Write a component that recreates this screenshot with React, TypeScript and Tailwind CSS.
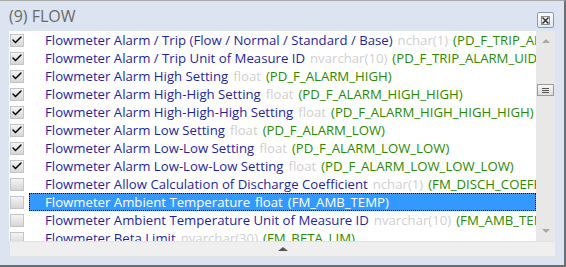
import { Check } from "lucide-react";

type Field = {
  label: string;
  type: string;
  column: string;
  checked: boolean;
  selected?: boolean;
};

const fields: Field[] = [
  { label: "Flowmeter Alarm / Trip (Flow / Normal / Standard / Base)", type: "nchar(1)", column: "(PD_F_TRIP_ALARM)", checked: true },
  { label: "Flowmeter Alarm / Trip Unit of Measure ID", type: "nvarchar(10)", column: "(PD_F_TRIP_ALARM_UID)", checked: true },
  { label: "Flowmeter Alarm High Setting", type: "float", column: "(PD_F_ALARM_HIGH)", checked: true },
  { label: "Flowmeter Alarm High-High Setting", type: "float", column: "(PD_F_ALARM_HIGH_HIGH)", checked: true },
  { label: "Flowmeter Alarm High-High-High Setting", type: "float", column: "(PD_F_ALARM_HIGH_HIGH_HIGH)", checked: true },
  { label: "Flowmeter Alarm Low Setting", type: "float", column: "(PD_F_ALARM_LOW)", checked: true },
  { label: "Flowmeter Alarm Low-Low Setting", type: "float", column: "(PD_F_ALARM_LOW_LOW)", checked: true },
  { label: "Flowmeter Alarm Low-Low-Low Setting", type: "float", column: "(PD_F_ALARM_LOW_LOW_LOW)", checked: true },
  { label: "Flowmeter Allow Calculation of Discharge Coefficient", type: "nchar(1)", column: "(FM_DISCH_COEFF)", checked: false },
  { label: "Flowmeter Ambient Temperature", type: "float", column: "(FM_AMB_TEMP)", checked: false, selected: true },
  { label: "Flowmeter Ambient Temperature Unit of Measure ID", type: "nvarchar(10)", column: "(FM_AMB_TEMP_UID)", checked: false },
  { label: "Flowmeter Beta Limit", type: "nvarchar(30)", column: "(FM_BETA_LIM)", checked: false },
];

const Box = ({ checked }: { checked: boolean }) => (
  <div className="w-[14px] h-[13px] shrink-0 border border-[#c4c4c4] bg-gradient-to-b from-[#f4f4f4] to-[#d6d6d6] flex items-center justify-center">
    {checked && <Check size={12} strokeWidth={3} className="text-black -mt-[1px]" />}
  </div>
);

const Row = ({ f }: { f: Field }) => (
  <div className="h-[18px] flex items-center shrink-0">
    <div className="w-[19px] pl-[1px] flex items-center">
      <Box checked={f.checked} />
    </div>
    <div
      className={
        "ml-[1px] flex-1 h-[18px] flex items-center pl-[16px] whitespace-nowrap overflow-hidden " +
        (f.selected ? "bg-[#3399ff] outline outline-1 outline-dotted outline-black -outline-offset-1" : "")
      }
    >
      <span className={f.selected ? "text-white" : "text-[#1f1fa0]"}>{f.label}</span>
      <span className={"ml-[5px] " + (f.selected ? "text-white" : "text-[#cfcfcf]")}>{f.type}</span>
      <span className={"ml-[5px] " + (f.selected ? "text-white" : "text-[#2a8a00]")}>{f.column}</span>
    </div>
  </div>
);

export default function App() {
  return (
    <div
      className="w-[566px] h-[267px] bg-[#dbe4f0] border-t border-t-[#a9a9a9] border-r-2 border-r-[#6e6e6e] border-b-2 border-b-[#6e6e6e] flex flex-col"
      style={{ fontFamily: '"Open Sans", "Noto Sans", sans-serif' }}
    >
      <div className="h-[30px] flex items-start pl-[9px] pr-[10px]">
        <div className="mt-[6px] text-[16px] text-[#6a6a6a] leading-[18px]">(9) FLOW</div>
        <div className="ml-auto mt-[11px] w-[17px] h-[16px] border border-[#8c9ab0] rounded-[2px] bg-gradient-to-b from-[#fafafa] to-[#e4e8ee] flex items-center justify-center">
          <svg width="9" height="9" viewBox="0 0 9 9">
            <path d="M1.5 1.5 L7.5 7.5 M7.5 1.5 L1.5 7.5" stroke="#333" strokeWidth="1.5" />
            <rect x="0.5" y="0.5" width="8" height="8" fill="none" stroke="#777" strokeWidth="0.8" />
          </svg>
        </div>
      </div>
      <div className="flex ml-[9px] mr-[9px] h-[210px]">
        <div className="flex-1 bg-white flex flex-col overflow-hidden text-[13.2px] leading-[18px]">
          {fields.map((f) => (
            <Row key={f.label} f={f} />
          ))}
        </div>
        <div className="w-[19px] bg-[#e8e8e8] flex flex-col items-center">
          <div className="mt-[8px] w-0 h-0 border-l-[4px] border-r-[4px] border-b-[4px] border-l-transparent border-r-transparent border-b-[#a8a8a8]" />
          <div className="mt-[41px] w-[17px] h-[12px] border border-[#9a9a9a] bg-gradient-to-b from-[#f6f6f6] to-[#dcdcdc] flex flex-col items-center justify-center gap-[1px]">
            <div className="w-[7px] h-[1px] bg-[#555]" />
            <div className="w-[7px] h-[1px] bg-[#555]" />
            <div className="w-[7px] h-[1px] bg-[#555]" />
          </div>
          <div className="mt-auto mb-[8px] w-0 h-0 border-l-[4px] border-r-[4px] border-t-[4px] border-l-transparent border-r-transparent border-t-[#a8a8a8]" />
        </div>
      </div>
      <div className="ml-[9px] mr-[8px] h-[16px] bg-[#efefef] border border-[#e2e2e2] flex items-center justify-center">
        <div className="w-0 h-0 border-l-[5px] border-r-[5px] border-b-[4px] border-l-transparent border-r-transparent border-b-[#555]" />
      </div>
    </div>
  );
}
